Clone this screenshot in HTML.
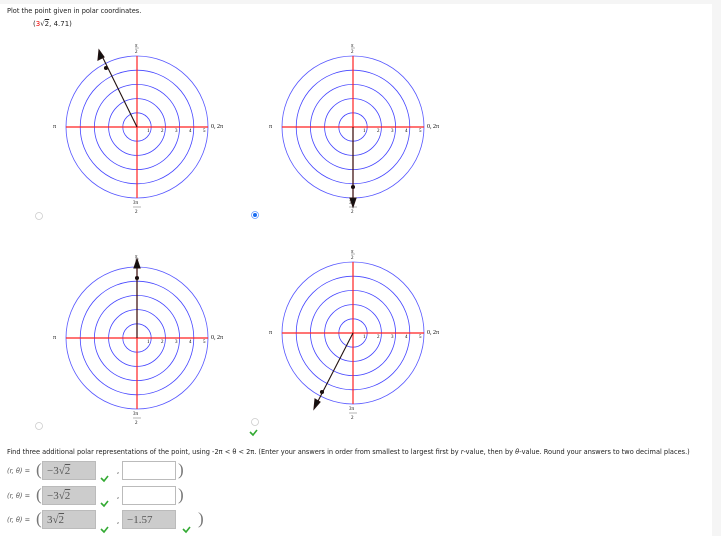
<!DOCTYPE html>
<html><head><meta charset="utf-8"><style>
body{margin:0;width:721px;height:536px;background:#fff;position:relative;overflow:hidden;font-family:"DejaVu Sans",sans-serif;color:#222}
.t{position:absolute;font-size:6.6px;white-space:nowrap}
.sv{position:absolute;left:0;top:0}
.box{position:absolute;height:19px;border:1px solid #bbb;box-sizing:border-box;font-family:"Liberation Serif",serif;font-size:11px;padding-left:4px;line-height:18px;color:#555}
.g{background:#ccc}
.w{background:#fff}
.ov{text-decoration:overline}
.par{position:absolute;font-family:"Liberation Serif",serif;font-size:17px;color:#777;line-height:17px}
</style></head><body>
<div style="position:absolute;left:0;top:0;width:721px;height:4px;background:#f5f5f5"></div>
<div style="position:absolute;left:712px;top:0;width:9px;height:536px;background:#f5f5f5"></div>
<div class="t" style="left:7px;top:7px">Plot the point given in polar coordinates.</div>
<div class="t" style="left:33px;top:20px;font-size:7px">(<span style="color:#e00">3</span>√<span class="ov">2</span>, 4.71)</div>

<svg class="sv" width="721" height="536" font-family="Liberation Serif,serif" font-size="6">
<defs>
<g id="p">
<circle r="14.2" fill="none" stroke="#44f" stroke-width="0.8"/>
<circle r="28.4" fill="none" stroke="#44f" stroke-width="0.8"/>
<circle r="42.6" fill="none" stroke="#44f" stroke-width="0.8"/>
<circle r="56.8" fill="none" stroke="#44f" stroke-width="0.8"/>
<circle r="71" fill="none" stroke="#55f" stroke-width="0.8"/>
<line x1="-71" y1="0" x2="71" y2="0" stroke="#f22" stroke-width="1.2"/>
<line x1="0" y1="-71" x2="0" y2="71" stroke="#f22" stroke-width="1.2"/>
<text x="10" y="5" font-size="5">1</text><text x="24" y="5" font-size="5">2</text><text x="38" y="5" font-size="5">3</text><text x="52" y="5" font-size="5">4</text><text x="66" y="5" font-size="5">5</text>
<text x="74" y="1">0, 2π</text>
<text x="-84" y="1">π</text>
<text x="-2" y="-80" font-size="5">π</text><line x1="-2" y1="-79" x2="2" y2="-79" stroke="#444" stroke-width="0.4"/><text x="-2" y="-74" font-size="5">2</text>
<text x="-4" y="77" font-size="5">3π</text><line x1="-4" y1="80" x2="4" y2="80" stroke="#444" stroke-width="0.4"/><text x="-2" y="86" font-size="5">2</text>
</g>
</defs>
<use href="#p" x="137" y="127"/>
<use href="#p" x="353" y="127"/>
<use href="#p" x="137" y="338"/>
<use href="#p" x="353" y="333"/>
<g stroke="#211" stroke-width="1.1" fill="#111">
<line x1="137" y1="127" x2="101" y2="54"/><polygon points="99,50 98,60 104,57"/><circle cx="106" cy="68" r="1.5"/>
<line x1="353" y1="127" x2="353" y2="203"/><polygon points="353,207 350,198 356,198"/><circle cx="353" cy="187" r="1.5"/>
<line x1="137" y1="338" x2="137" y2="263"/><polygon points="137,259 134,268 140,268"/><circle cx="137" cy="278" r="1.5"/>
<line x1="353" y1="333" x2="316" y2="405"/><polygon points="314,409 315,399 320,402"/><circle cx="322" cy="392" r="1.5"/>
</g>
<circle cx="39" cy="216" r="3.5" fill="#fff" stroke="#ccc" stroke-width="0.8"/>
<circle cx="255" cy="215" r="3.5" fill="#fff" stroke="#69f" stroke-width="0.8"/><circle cx="255" cy="215" r="2" fill="#1a6cf0"/>
<circle cx="39" cy="426" r="3.5" fill="#fff" stroke="#ccc" stroke-width="0.8"/>
<circle cx="255" cy="422" r="3.5" fill="#fff" stroke="#ccc" stroke-width="0.8"/>
<g stroke="#3a3" stroke-width="1.6" fill="none">
<polyline points="250,432 253,435 257,430"/>
<polyline points="101,478 104,481 108,476"/>
<polyline points="101,503 104,506 108,501"/>
<polyline points="101,529 104,532 108,527"/>
<polyline points="183,529 186,532 190,527"/>
</g>
</svg>

<div class="t" style="left:7px;top:448px;font-size:6.6px">Find three additional polar representations of the point, using -2π &lt; θ &lt; 2π. (Enter your answers in order from smallest to largest first by <i>r</i>-value, then by <i>θ</i>-value. Round your answers to two decimal places.)</div>

<div class="t" style="left:7px;top:467px;color:#555"><i>(r, θ)</i> =</div>
<div class="par" style="left:36px;top:461px">(</div>
<div class="box g" style="left:42px;top:461px;width:54px">−3√<span class="ov">2</span></div>
<div class="t" style="left:117px;top:467px">,</div>
<div class="box w" style="left:122px;top:461px;width:54px"></div>
<div class="par" style="left:178px;top:461px">)</div>

<div class="t" style="left:7px;top:492px;color:#555"><i>(r, θ)</i> =</div>
<div class="par" style="left:36px;top:486px">(</div>
<div class="box g" style="left:42px;top:486px;width:54px">−3√<span class="ov">2</span></div>
<div class="t" style="left:117px;top:492px">,</div>
<div class="box w" style="left:122px;top:486px;width:54px"></div>
<div class="par" style="left:178px;top:486px">)</div>

<div class="t" style="left:7px;top:516px;color:#555"><i>(r, θ)</i> =</div>
<div class="par" style="left:36px;top:510px">(</div>
<div class="box g" style="left:42px;top:510px;width:54px">3√<span class="ov">2</span></div>
<div class="t" style="left:117px;top:517px">,</div>
<div class="box g" style="left:122px;top:510px;width:54px">−1.57</div>
<div class="par" style="left:198px;top:510px">)</div>
</body></html>
